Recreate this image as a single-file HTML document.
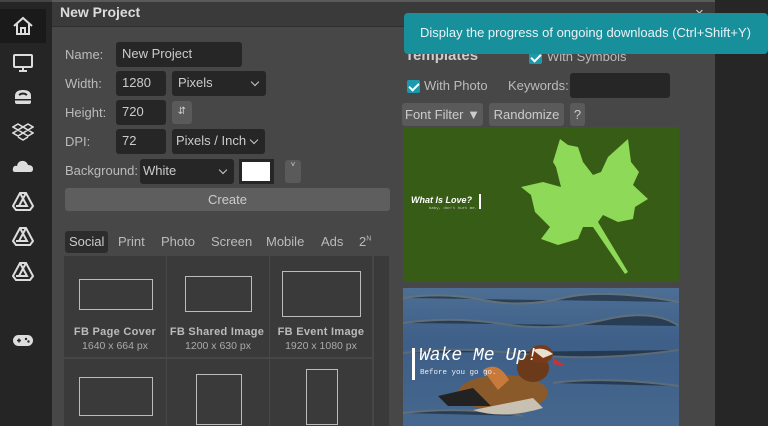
<!DOCTYPE html>
<html style="width:768px;height:426px;overflow:hidden"><head><meta charset="utf-8"><style>
*{box-sizing:border-box;margin:0;padding:0}
body{width:768px;height:426px;overflow:hidden;background:#262626;font-family:"Liberation Sans","DejaVu Sans",sans-serif;font-size:13px;color:#ccc;position:relative}
.abs{position:absolute}
#side{left:0;top:0;width:52px;height:426px;background:#252525;border-top:2px solid #444}
#dlg{left:52px;top:0;width:663px;height:426px;background:#474747;border-top:2px solid #5a5a5a;overflow:hidden}
#title{left:0;top:0;width:663px;height:25px;background:#3a3a3a;border-bottom:1px solid #2e2e2e;color:#ddd;font-weight:bold;font-size:14px;padding:2px 0 0 8px}
.lbl{color:#bbb;font-size:13px}
.inp{background:#262626;border-radius:3px;color:#ccc;font-size:13px;padding:4px 0 0 6px;height:25px}
.sel:after{content:"";position:absolute;right:8px;top:8px;width:5px;height:5px;border-right:1.5px solid #ccc;border-bottom:1.5px solid #ccc;transform:rotate(45deg)}
.btn{background:#5a5a5a;border-radius:3px;color:#ccc;font-size:13px;text-align:center}
.cell{background:#3a3a3a;width:102px;height:101px}
.cell .r{position:absolute;border:1.5px solid #bbb}
.cell .t{position:absolute;left:0;width:102px;text-align:center;font-weight:bold;font-size:11px;color:#bbb;top:70px;letter-spacing:.3px;white-space:nowrap}
.cell .s{position:absolute;left:0;width:102px;text-align:center;font-size:10.5px;color:#aaa;top:84px}
.chk{width:13px;height:13px;background:#1a9aac;border-radius:2px}
.chk:after{content:"";position:absolute;left:4px;top:1px;width:4px;height:8px;border-right:2px solid #fff;border-bottom:2px solid #fff;transform:rotate(45deg)}
svg.i{position:absolute;left:12px;width:22px;height:22px}
</style></head><body>
<div id="side" class="abs">
 <div class="abs" style="left:0;top:7px;width:46px;height:34px;background:#1a1a1a"></div>
 <svg class="i" style="top:13px" viewBox="0 0 22 22" fill="none" stroke="#ddd" stroke-width="2"><path d="M2 11 L11 3 L20 11 M5 9 V19 H17 V9 M9 19 V13 H13 V19"/></svg>
 <svg class="i" style="top:50px" viewBox="0 0 22 22" fill="none" stroke="#ddd" stroke-width="2"><rect x="2" y="3" width="18" height="12" rx="1"/><path d="M11 15 V19 M7 19 H15"/></svg>
 <svg class="i" style="top:84px" viewBox="0 0 22 22"><path d="M3 10 Q3 4 11 4 Q19 4 19 10 V16 Q19 18 17 18 H5 Q3 18 3 16Z" fill="#ddd"/><path d="M7 9 Q11 6 15 9" stroke="#252525" stroke-width="2" fill="none"/><rect x="3" y="13" width="16" height="1.5" fill="#252525"/></svg>
 <svg class="i" style="top:119px" viewBox="0 0 22 22" fill="none" stroke="#ddd" stroke-width="1.6"><path d="M6 3 L11 6 L6 9 L1 6Z M16 3 L21 6 L16 9 L11 6Z M6 9 L11 12 L6 15 L1 12Z M16 9 L21 12 L16 15 L11 12Z M6 16 L11 19 L16 16"/></svg>
 <svg class="i" style="top:153px" viewBox="0 0 22 22"><path d="M3 17 Q0 17 1 13 Q2 10 5 11 Q6 5 12 6 Q15 7 16 10 Q21 10 21 14 Q21 17 18 17Z" fill="#ddd"/></svg>
 <svg class="i" style="top:188px" viewBox="0 0 22 22" fill="none" stroke="#ddd" stroke-width="2"><path d="M8 3 H14 L21 16 L18 20 H4 L1 16Z M8 3 L15 16 H4 M14 3 L7 16"/></svg>
 <svg class="i" style="top:223px" viewBox="0 0 22 22" fill="none" stroke="#ddd" stroke-width="2"><path d="M8 3 H14 L21 16 L18 20 H4 L1 16Z M8 3 L15 16 H4 M14 3 L7 16"/></svg>
 <svg class="i" style="top:258px" viewBox="0 0 22 22" fill="none" stroke="#ddd" stroke-width="2"><path d="M8 3 H14 L21 16 L18 20 H4 L1 16Z M8 3 L15 16 H4 M14 3 L7 16"/></svg>
 <svg class="i" style="top:327px" viewBox="0 0 22 22"><rect x="1" y="6" width="20" height="11" rx="5.5" fill="#ddd"/><path d="M5 11.5 H9 M7 9.5 V13.5" stroke="#252525" stroke-width="1.5"/><circle cx="14" cy="10" r="1.2" fill="#252525"/><circle cx="16.5" cy="12.5" r="1.2" fill="#252525"/></svg>
</div>
<div id="dlg" class="abs">
 <div id="title" class="abs">New Project</div>
 <div class="abs lbl" style="left:13px;top:45px">Name:</div>
 <div class="abs inp" style="left:64px;top:40px;width:126px">New Project</div>
 <div class="abs lbl" style="left:13px;top:74px">Width:</div>
 <div class="abs inp" style="left:64px;top:69px;width:50px">1280</div>
 <div class="abs inp sel" style="left:120px;top:69px;width:94px">Pixels</div>
 <div class="abs lbl" style="left:13px;top:103px">Height:</div>
 <div class="abs inp" style="left:64px;top:98px;width:50px">720</div>
 <div class="abs btn" style="left:120px;top:99px;width:20px;height:23px;font-size:10px;padding-top:5px">⇵</div>
 <div class="abs lbl" style="left:13px;top:132px">DPI:</div>
 <div class="abs inp" style="left:64px;top:127px;width:50px">72</div>
 <div class="abs inp sel" style="left:120px;top:127px;width:93px;padding-left:4px">Pixels / Inch</div>
 <div class="abs lbl" style="left:13px;top:161px">Background:</div>
 <div class="abs inp sel" style="left:88px;top:157px;width:94px;padding-left:3px">White</div>
 <div class="abs" style="left:187px;top:157px;width:35px;height:25px;background:#262626"><div class="abs" style="left:3px;top:3px;width:28px;height:19px;background:#fff"></div></div>
 <div class="abs btn" style="left:233px;top:158px;width:16px;height:23px;font-size:8px">˅</div>
 <div class="abs btn" style="left:13px;top:186px;width:325px;height:23px;padding-top:4px;background:#5e5e5e">Create</div>
 <div class="abs" style="left:13px;top:229px;width:43px;height:22px;background:#2c2c2c;border-radius:3px"></div>
 <div class="abs" style="left:17px;top:232px;font-size:13px;color:#ccc">Social</div>
 <div class="abs" style="left:66px;top:232px;color:#bbb">Print</div>
 <div class="abs" style="left:109px;top:232px;color:#bbb">Photo</div>
 <div class="abs" style="left:159px;top:232px;color:#bbb">Screen</div>
 <div class="abs" style="left:214px;top:232px;color:#bbb">Mobile</div>
 <div class="abs" style="left:269px;top:232px;color:#bbb">Ads</div>
 <div class="abs" style="left:307px;top:232px;color:#bbb">2<sup style="font-size:7px">N</sup></div>
 <div class="abs" style="left:12px;top:253px;width:326px;height:173px;background:#474747"></div>
 <div class="abs" style="left:322px;top:254px;width:15px;height:172px;background:#3a3a3a"></div>
 <div class="abs cell" style="left:12px;top:254px"><div class="r" style="left:15px;top:23px;width:74px;height:31px"></div><div class="t">FB Page Cover</div><div class="s">1640 x 664 px</div></div>
 <div class="abs cell" style="left:115px;top:254px"><div class="r" style="left:18px;top:20px;width:67px;height:36px"></div><div class="t" style="left:-1px">FB Shared Image</div><div class="s">1200 x 630 px</div></div>
 <div class="abs cell" style="left:218px;top:254px"><div class="r" style="left:12px;top:15px;width:79px;height:46px"></div><div class="t">FB Event Image</div><div class="s">1920 x 1080 px</div></div>
 <div class="abs cell" style="left:12px;top:357px;height:69px"><div class="r" style="left:15px;top:18px;width:74px;height:39px"></div></div>
 <div class="abs cell" style="left:115px;top:357px;height:69px"><div class="r" style="left:29px;top:15px;width:46px;height:51px"></div></div>
 <div class="abs cell" style="left:218px;top:357px;height:69px"><div class="r" style="left:36px;top:10px;width:32px;height:56px"></div></div>
 <div class="abs" style="left:353px;top:45px;font-weight:bold;font-size:15px;color:#ccc">Templates</div>
 <div class="abs chk" style="left:477px;top:49px"></div>
 <div class="abs" style="left:495px;top:47px;color:#bbb">With Symbols</div>
 <div class="abs chk" style="left:355px;top:78px"></div>
 <div class="abs" style="left:372px;top:76px;color:#bbb">With Photo</div>
 <div class="abs" style="left:456px;top:76px;color:#bbb">Keywords:</div>
 <div class="abs inp" style="left:518px;top:71px;width:100px"></div>
 <div class="abs btn" style="left:350px;top:101px;width:81px;height:23px;padding-top:4px">Font Filter ▼</div>
 <div class="abs btn" style="left:437px;top:101px;width:75px;height:23px;padding-top:4px">Randomize</div>
 <div class="abs btn" style="left:518px;top:101px;width:15px;height:23px;padding-top:4px">?</div>
 <div class="abs" style="left:351px;top:125px;width:276px;height:155px;background:#375c16;overflow:hidden">
  <svg width="276" height="155" viewBox="0 0 276 155"><path d="M157 12 L165 18 L175 20 L180 35 L190 48 L198 45 L205 30 L225 12 L228 35 L236 45 L230 58 L245 72 L232 80 L230 92 L215 95 L200 88 L195 95 L225 145 L222 147 L190 100 L180 100 L175 112 L155 118 L138 112 L147 100 L132 85 L128 68 L118 60 L140 55 L158 60 L153 40 L150 35Z" fill="#8ed957"/></svg>
  <div class="abs" style="left:8px;top:68px;font-size:9px;font-weight:bold;font-style:italic;color:#fff">What Is Love?</div>
  <div class="abs" style="left:76px;top:67px;width:2px;height:15px;background:#fff"></div>
  <div class="abs" style="left:26px;top:80px;font-size:4px;color:#ccc;font-family:'Liberation Mono',monospace">baby, don't hurt me.</div>
 </div>
 <div class="abs" style="left:351px;top:286px;width:276px;height:140px;overflow:hidden;background:linear-gradient(180deg,#4d6f94 0%,#3d5f88 40%,#46688e 100%)">
  <svg width="276" height="140" viewBox="0 0 276 140"><g stroke="#8a7a5a" stroke-width="2" opacity=".4"><path d="M0 10 Q40 4 80 12 T160 10 T276 14"/><path d="M0 35 Q50 28 100 36 T200 32 T276 38"/><path d="M0 65 Q50 58 120 66 T276 62"/><path d="M150 95 Q200 88 276 98"/><path d="M0 125 Q60 118 120 128"/></g>
  <ellipse cx="100" cy="105" rx="45" ry="18" fill="#8b5a2b"/><ellipse cx="130" cy="80" rx="16" ry="14" fill="#6b3a1a"/><ellipse cx="138" cy="66" rx="12" ry="9" fill="#7a3a1a"/><path d="M130 62 Q140 58 150 66 L140 70Z" fill="#e8e0d0"/><path d="M150 70 L163 78 L150 76Z" fill="#d03030"/><path d="M35 108 L70 100 L88 118 L45 118Z" fill="#222"/><path d="M70 122 Q100 132 140 120 L130 110Z" fill="#c8c0b0"/><path d="M80 82 Q95 72 106 92 L95 102Z" fill="#c87a3a"/></svg>
  <div class="abs" style="left:9px;top:60px;width:3px;height:32px;background:#fff"></div>
  <div class="abs" style="left:16px;top:58px;font-size:18px;font-style:italic;color:#fff;font-family:'Liberation Mono',monospace">Wake Me Up!</div>
  <div class="abs" style="left:17px;top:81px;font-size:7.5px;color:#eee;font-family:'Liberation Mono',monospace">Before you go go.</div>
 </div>
 <div class="abs" style="left:643px;top:3px;color:#ccc;font-size:15px">×</div>
</div>
<div class="abs" style="left:404px;top:13px;width:364px;height:41px;background:#18909c;border-radius:4px;color:#e8f4f6;font-size:13px;padding:12px 0 0 16px">Display the progress of ongoing downloads (Ctrl+Shift+Y)</div>
</body></html>
